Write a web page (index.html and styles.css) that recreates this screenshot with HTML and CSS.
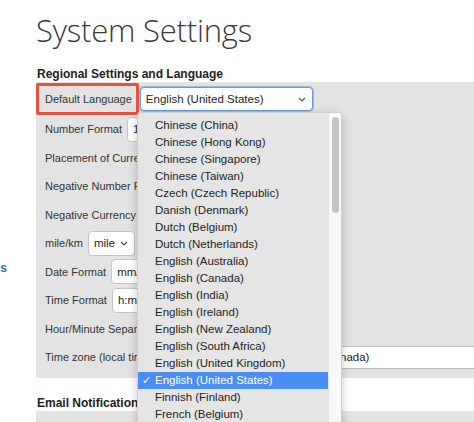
FILE: index.html
```html
<!DOCTYPE html>
<html lang="en">
<head>
  <meta charset="UTF-8">
  <title>System Settings</title>
  <link rel="stylesheet" href="styles.css">
</head>
<body>
  <div class="page">
    <aside class="sidebar">
      <a class="side-link" href="#">Settings</a>
    </aside>

    <main class="content">
      <h1 class="title">System Settings</h1>

      <h2 class="section-title">Regional Settings and Language</h2>
      <div class="panel">
        <div class="row row-first">
          <span class="label label-marked">Default Language</span>
          <div class="select select-focus select-lang">
            <span class="select-text">English (United States)</span>
            <svg class="chevron" width="8" height="5" viewBox="0 0 8 5"><polyline points="1,1 4,4 7,1" /></svg>
          </div>
        </div>
        <div class="row">
          <span class="label">Number Format</span>
          <div class="select select-small"><span class="select-text">1,234.56</span></div>
        </div>
        <div class="row">
          <span class="label">Placement of Currency Symbol</span>
          <div class="select select-small"><span class="select-text">$1.1</span></div>
        </div>
        <div class="row">
          <span class="label">Negative Number Format</span>
          <div class="select select-small"><span class="select-text">-1.1</span></div>
        </div>
        <div class="row">
          <span class="label">Negative Currency Format</span>
          <div class="select select-small"><span class="select-text">-$1.1</span></div>
        </div>
        <div class="row">
          <span class="label">mile/km</span>
          <div class="select select-mile">
            <span class="select-text">mile</span>
            <svg class="chevron" width="8" height="5" viewBox="0 0 8 5"><polyline points="1,1 4,4 7,1" /></svg>
          </div>
        </div>
        <div class="row">
          <span class="label">Date Format</span>
          <div class="select select-small"><span class="select-text">mm/dd/yyyy</span></div>
        </div>
        <div class="row">
          <span class="label">Time Format</span>
          <div class="select select-small"><span class="select-text">h:mm tt</span></div>
        </div>
        <div class="row">
          <span class="label">Hour/Minute Separator</span>
          <div class="select select-small"><span class="select-text">:</span></div>
        </div>
        <div class="row">
          <span class="label">Time zone (local time)</span>
          <div class="select select-wide"><span class="select-text">(UTC-5:00) Eastern Time (US &amp; Canada)</span></div>
        </div>

        <ul class="dropdown">
          <li class="option"><span class="check"></span>Chinese (China)</li>
          <li class="option"><span class="check"></span>Chinese (Hong Kong)</li>
          <li class="option"><span class="check"></span>Chinese (Singapore)</li>
          <li class="option"><span class="check"></span>Chinese (Taiwan)</li>
          <li class="option"><span class="check"></span>Czech (Czech Republic)</li>
          <li class="option"><span class="check"></span>Danish (Denmark)</li>
          <li class="option"><span class="check"></span>Dutch (Belgium)</li>
          <li class="option"><span class="check"></span>Dutch (Netherlands)</li>
          <li class="option"><span class="check"></span>English (Australia)</li>
          <li class="option"><span class="check"></span>English (Canada)</li>
          <li class="option"><span class="check"></span>English (India)</li>
          <li class="option"><span class="check"></span>English (Ireland)</li>
          <li class="option"><span class="check"></span>English (New Zealand)</li>
          <li class="option"><span class="check"></span>English (South Africa)</li>
          <li class="option"><span class="check"></span>English (United Kingdom)</li>
          <li class="option selected"><span class="check">✓</span>English (United States)</li>
          <li class="option"><span class="check"></span>Finnish (Finland)</li>
          <li class="option"><span class="check"></span>French (Belgium)</li>
          <li class="option"><span class="check"></span>French (Canada)</li>
          <li class="scrollbar"><span class="thumb"></span></li>
        </ul>
      </div>

      <h2 class="section-title">Email Notifications</h2>
      <div class="panel panel-next"></div>
    </main>
  </div>
</body>
</html>
```

FILE: styles.css
```css
html, body {
  margin: 0;
  background: #fff;
  font-family: "Liberation Sans", Arial, sans-serif;
  color: #333;
}

.page {
  display: flex;
  width: 474px;
  height: 422px;
  overflow: hidden;
}

.sidebar {
  width: 7px;
  flex-shrink: 0;
  display: flex;
  justify-content: flex-end;
  overflow: hidden;
  padding-top: 260px;
  align-items: flex-start;
}

.side-link {
  flex-shrink: 0;
  white-space: nowrap;
  font-size: 12px;
  line-height: 16px;
  font-weight: bold;
  color: #2b6cb3;
  text-decoration: none;
}

.content {
  flex: 1;
  margin-left: 29px;
  min-width: 0;
}

.title {
  margin: 12px 0 0;
  font-family: "Open Sans", sans-serif;
  font-weight: 300;
  font-size: 31px;
  line-height: 37px;
  letter-spacing: -0.2px;
  color: #3a3a3a;
  white-space: nowrap;
}

.section-title {
  margin: 17px 0 0 1px;
  font-size: 12px;
  line-height: 16px;
  font-weight: bold;
  color: #222;
  white-space: nowrap;
}

.panel {
  position: relative;
  background: #e3e3e3;
  padding: 1px 0 6px;
}

.panel-next {
  margin-top: 0;
  height: 40px;
  padding: 0;
}

.row {
  display: flex;
  align-items: center;
  gap: 5px;
  height: 28.5px;
  padding-left: 9px;
  white-space: nowrap;
}

.row-first {
  height: 32px;
  padding-left: 0;
  gap: 1px;
}

.label {
  font-size: 11px;
  color: #333;
}

.label-marked {
  display: flex;
  align-items: center;
  height: 26px;
  padding: 0 4px 0 6px;
  border: 3px solid #e9503f;
  border-radius: 2px;
}

.select {
  display: flex;
  align-items: center;
  justify-content: space-between;
  box-sizing: border-box;
  height: 25px;
  padding: 0 6px 0 5px;
  background: #fff;
  border: 1px solid #c6c6c6;
  border-radius: 4px;
  font-size: 11.5px;
  color: #222;
  flex-shrink: 0;
}

.select-focus {
  height: 24px;
  border-color: #6b9bd6;
  box-shadow: 0 0 0 1px rgba(107, 155, 214, 0.55);
}

.select-lang {
  width: 173px;
}

.select-mile {
  width: 47px;
}

.select-small {
  width: 70px;
}

.select-wide {
  width: 360px;
  height: 23px;
  padding-left: 1px;
  border-radius: 0;
  border-color: #bdbdbd;
}

.chevron {
  fill: none;
  stroke: #555;
  stroke-width: 1.2;
}

.dropdown {
  position: absolute;
  left: 101px;
  top: 30px;
  width: 205px;
  height: 330px;
  box-sizing: border-box;
  margin: 0;
  padding: 4px 13px 0 0;
  list-style: none;
  background: #e5e5e5;
  border: 1px solid #cfcfcf;
  border-radius: 3px;
  box-shadow: 0 3px 10px rgba(0, 0, 0, 0.22);
  overflow: hidden;
  z-index: 2;
}

.option {
  height: 17px;
  line-height: 17px;
  padding-left: 17px;
  font-size: 11.5px;
  color: #1e1e1e;
  white-space: nowrap;
}

.check {
  display: inline-block;
  width: 13px;
  margin-left: -13px;
  font-size: 11px;
}

.option.selected {
  background: #4a8ef4;
  color: #fff;
}

.scrollbar {
  position: absolute;
  top: 0;
  right: 0;
  bottom: 0;
  width: 13px;
  background: #f8f8f8;
  border-left: 1px solid #e2e2e2;
  box-sizing: border-box;
}

.thumb {
  display: block;
  margin: 4px 0 0 3px;
  width: 7px;
  height: 96px;
  border-radius: 4px;
  background: #c3c3c3;
}
```
